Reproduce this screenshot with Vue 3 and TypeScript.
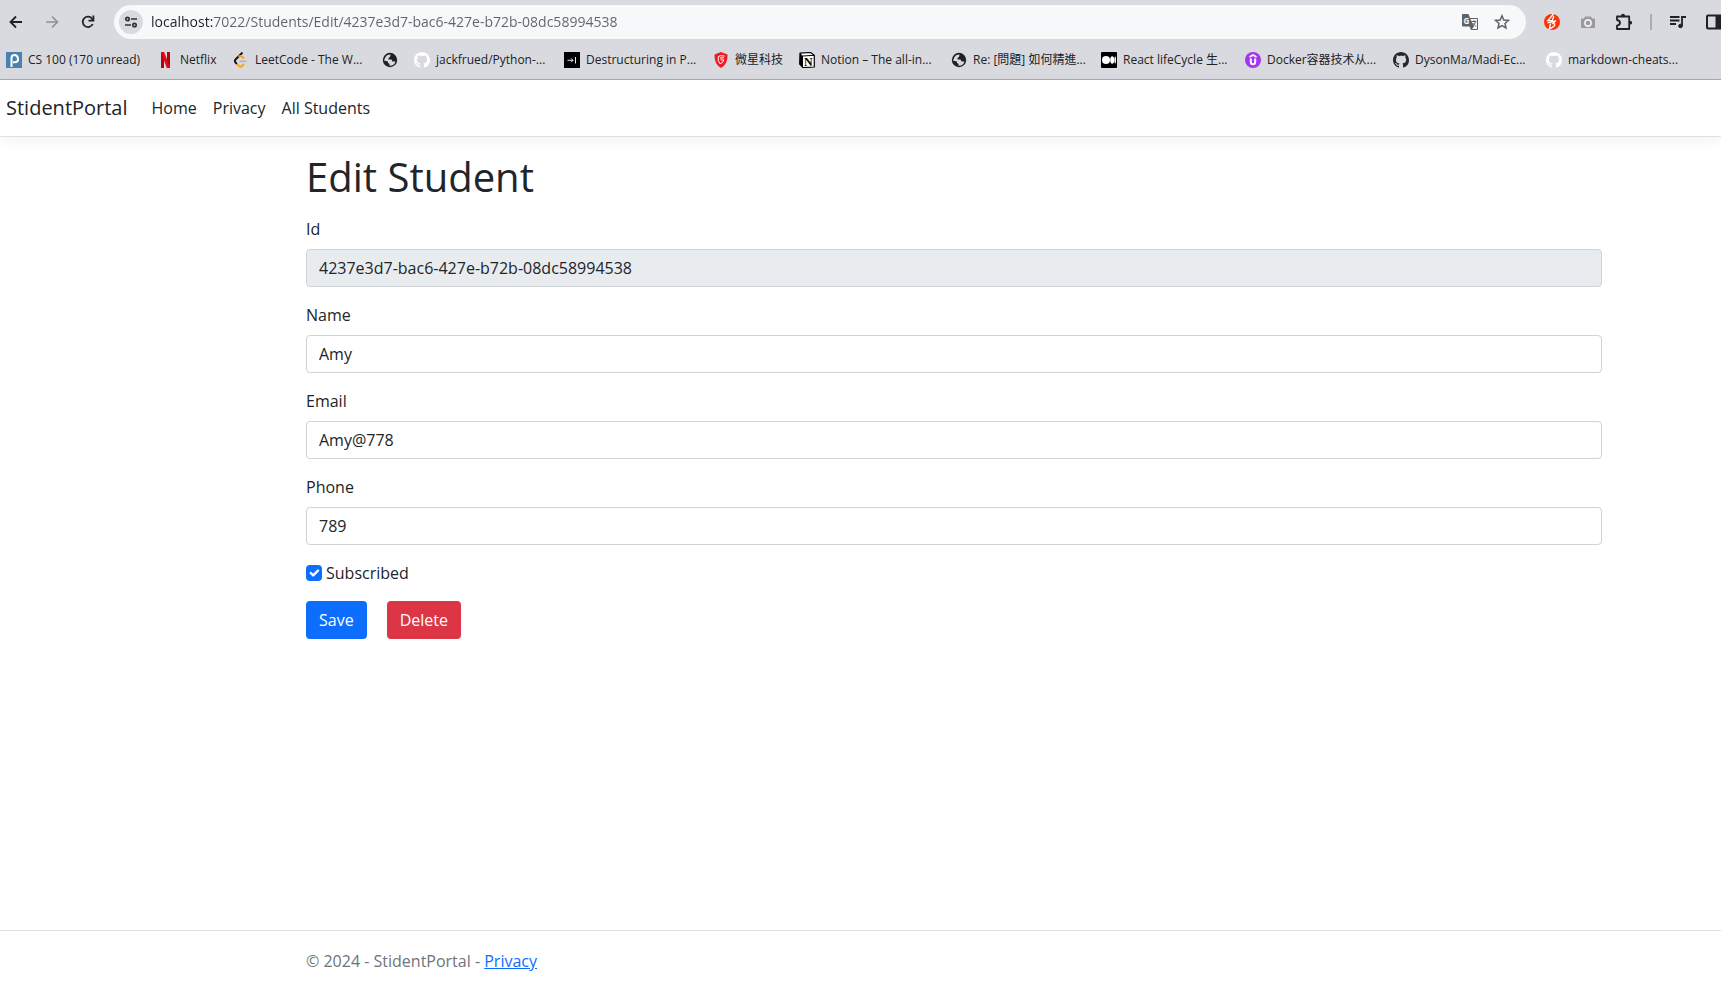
<script setup lang="ts">
import { ref } from 'vue'

interface Bookmark {
  icon: string
  title: string
  width: number
}

const bookmarks: Bookmark[] = [
  { icon: 'pandora', title: 'CS 100 (170 unread)', width: 152 },
  { icon: 'netflix', title: 'Netflix', width: 75 },
  { icon: 'leetcode', title: 'LeetCode - The W...', width: 149 },
  { icon: 'globe', title: '', width: 32 },
  { icon: 'github-light', title: 'jackfrued/Python-...', width: 150 },
  { icon: 'arrow', title: 'Destructuring in P...', width: 149 },
  { icon: 'msi', title: '微星科技', width: 86 },
  { icon: 'notion', title: 'Notion – The all-in...', width: 152 },
  { icon: 'globe', title: 'Re: [問題] 如何精進...', width: 150 },
  { icon: 'medium', title: 'React lifeCycle 生...', width: 144 },
  { icon: 'udemy', title: 'Docker容器技术从...', width: 148 },
  { icon: 'github', title: 'DysonMa/Madi-Ec...', width: 153 },
  { icon: 'github-light', title: 'markdown-cheats...', width: 150 },
]

const url = ref('localhost:7022/Students/Edit/4237e3d7-bac6-427e-b72b-08dc58994538')
const student = ref({
  id: '4237e3d7-bac6-427e-b72b-08dc58994538',
  name: 'Amy',
  email: 'Amy@778',
  phone: '789',
  subscribed: true,
})
</script>

<template>
  <div class="window">
    <div class="browser">
      <div class="toolbar">
        <div class="history">
          <button type="button" class="tool" aria-label="Back">
            <svg width="16" height="16" viewBox="0 0 16 16" fill="none" stroke="#202124" stroke-width="1.8"><path d="M14 8H3M8 2.5L2.5 8L8 13.5" /></svg>
          </button>
          <button type="button" class="tool" aria-label="Forward">
            <svg width="16" height="16" viewBox="0 0 16 16" fill="none" stroke="#8e9096" stroke-width="1.6"><path d="M2 8H13M8 2.5L13.5 8L8 13.5" /></svg>
          </button>
          <button type="button" class="tool" aria-label="Reload">
            <svg width="16" height="16" viewBox="0 0 16 16" fill="none" stroke="#202124" stroke-width="1.8"><path d="M12.7 10A5.2 5.2 0 1 1 12.3 5L13.5 6.5" /><path d="M13.4 1.5V6.6H8.5" /></svg>
          </button>
        </div>
        <div class="omnibox">
          <button type="button" class="site" aria-label="Site information">
            <svg width="14" height="14" viewBox="0 0 14 14" fill="none" stroke="#303236" stroke-width="1.7"><circle cx="3.5" cy="4" r="1.7" /><path d="M7 4H13M1 10H7" /><circle cx="10.5" cy="10" r="1.7" /></svg>
          </button>
          <input v-model="url" class="address" type="text" aria-label="Address" spellcheck="false" />
          <button type="button" class="tool" aria-label="Translate">
            <svg width="18" height="18" viewBox="0 0 18 18"><path d="M2 1H7.5L9 5H16.2Q17 5 17 6V16Q17 17 16 17H10L8.500 13.5H2Q1 13.5 1 12.5V2Q1 1 2 1Z" fill="#5f6368" /><path d="M9.5 6H16V16H11L13 13.5Z" fill="#f6f8fa" /><text x="2.5" y="10.5" font-size="8" font-weight="700" fill="#f6f8fa" font-family="Open Sans, sans-serif">G</text><path d="M10.5 8.5H15.5M13 7V8.5M14.5 8.5Q14 11.5 11.5 13M11.5 10L15 13.5" fill="none" stroke="#5f6368" /></svg>
          </button>
          <button type="button" class="tool star" aria-label="Bookmark this page">
            <svg width="16" height="16" viewBox="0 0 16 16" fill="none" stroke="#5f6368" stroke-width="1.5"><path d="M8 1.8L9.8 6L14.5 6.4L11 9.5L12 14L8 11.6L4 14L5 9.5L1.5 6.4L6.2 6Z" /></svg>
          </button>
        </div>
        <div class="extensions">
          <button type="button" class="tool" aria-label="Extension">
            <svg width="18" height="18" viewBox="0 0 18 18"><circle cx="9" cy="9" r="8" fill="#f9320c" /><path d="M10.5 1L4.8 7.6H9.2M10.8 3L8.600 10M4.5 9.800L13 7.8Q10.500 9.5 9.8 10.5Q13 10.600 11.2 13Q9 15 5.500 16.5M7.5 10.5L6.5 15.500" fill="none" stroke="#fff" stroke-width="1.3" /></svg>
          </button>
          <button type="button" class="tool" aria-label="Screenshot">
            <svg width="16" height="16" viewBox="0 0 16 16"><path d="M5 2.5H11L12 4.5H14Q15 4.5 15 5.5V13Q15 14 14 14H2Q1 14 1 13V5.5Q1 4.5 2 4.5H4Z" fill="#9a9a9a" /><circle cx="8" cy="9" r="3.1" fill="none" stroke="#f2f2f2" stroke-width="1.6" /></svg>
          </button>
          <button type="button" class="tool" aria-label="Extensions">
            <svg width="18" height="18" viewBox="0 0 18 18" fill="none" stroke="#202124" stroke-width="1.8"><path d="M2 3.500H14.2V16H2V12.6Q5 12.2 5 9.8Q5 7.4 2 7Z" stroke-linejoin="round" /><path d="M6 3.2Q6 .8 8 .8T10 3.2ZM14.8 7.8Q17.2 7.8 17.2 9.700T14.8 11.6Z" fill="#202124" stroke="none" /></svg>
          </button>
          <span class="divider"></span>
          <button type="button" class="tool" aria-label="Media controls">
            <svg width="18" height="16" viewBox="0 0 18 16" fill="none" stroke="#202124" stroke-width="1.8"><path d="M1 3H10.5M1 6.5H10.5M1 10H7M13 12V3H17" /><circle cx="11.500" cy="12" r="1.8" fill="#202124" stroke-width="1" /></svg>
          </button>
          <button type="button" class="tool" aria-label="Side panel">
            <svg width="18" height="16" viewBox="0 0 18 16"><rect x="2" y="1.5" width="15" height="13" rx="1" fill="none" stroke="#202124" stroke-width="2" /><path d="M10.5 1H17V15H10.5Z" fill="#202124" /></svg>
          </button>
        </div>
      </div>
      <nav class="bookmarks" aria-label="Bookmarks">
        <a
          v-for="(item, index) in bookmarks"
          :key="index"
          href="#"
          class="bookmark"
          :style="{ width: item.width + 'px' }"
          :aria-label="item.title || 'Bookmark'"
        >
          <svg width="16" height="16" viewBox="0 0 16 16" aria-hidden="true">
            <template v-if="item.icon === 'pandora'">
              <rect width="16" height="16" fill="#4a82ad" />
              <path d="M5.500 15V6Q5.5 3 8.500 3T12 6.600T8.500 10.200H7" fill="none" stroke="#fff" stroke-width="2" />
            </template>
            <template v-else-if="item.icon === 'netflix'">
              <path d="M4.5 0V16M10.5 0V16" stroke="#b1060f" stroke-width="3" />
              <path d="M4.5 0L10.5 16" stroke="#e50914" stroke-width="3.2" />
            </template>
            <template v-else-if="item.icon === 'leetcode'">
              <path d="M9.5 .5L2.5 7.5Q1.2 9 2.5 10.5L4 12" fill="none" stroke="#111" stroke-width="1.9" />
              <path d="M4 12L6 14Q7.5 15.5 9 14L11 12M5.5 4.8Q7.5 3.2 9 4.8L11 6.5" fill="none" stroke="#ffa116" stroke-width="1.9" />
              <path d="M6.5 9.3H13.5" stroke="#b3b3b3" stroke-width="1.6" />
            </template>
            <template v-else-if="item.icon === 'globe'">
              <circle cx="8" cy="8" r="7.2" fill="#202124" />
              <path d="M2 8.5Q2.5 5 5.5 3L8.5 2.5V4.5L6.5 6V7.5H9.5L10.5 9.5H13.5Q13 12.5 10 13.5L7.5 13.8V11.8L6 11V9.5Z" fill="#d9dae0" />
              <path d="M8.5 3.8L10.5 5.5L13.5 6.5" stroke="#202124" stroke-width="1.5" />
            </template>
            <template v-else-if="item.icon === 'github' || item.icon === 'github-light'">
              <path
                :fill="item.icon === 'github' ? '#24292e' : '#ffffff'"
                d="M8 0C3.58 0 0 3.58 0 8c0 3.54 2.29 6.53 5.47 7.59.4.07.55-.17.55-.38 0-.19-.01-.82-.01-1.49-2.01.37-2.53-.49-2.69-.94-.09-.23-.48-.94-.82-1.13-.28-.15-.68-.52-.01-.53.63-.01 1.08.58 1.23.82.72 1.21 1.87.87 2.33.66.07-.52.28-.87.51-1.07-1.78-.2-3.64-.89-3.64-3.95 0-.87.31-1.59.82-2.15-.08-.2-.36-1.02.08-2.12 0 0 .67-.21 2.2.82.64-.18 1.32-.27 2-.27s1.36.09 2 .27c1.53-1.04 2.2-.82 2.2-.82.44 1.1.16 1.92.08 2.12.51.56.82 1.27.82 2.15 0 3.07-1.87 3.75-3.65 3.95.29.25.54.73.54 1.48 0 1.07-.01 1.93-.01 2.2 0 .21.15.46.55.38A8.01 8.01 0 0 0 16 8c0-4.42-3.58-8-8-8Z"
              />
            </template>
            <template v-else-if="item.icon === 'arrow'">
              <rect width="16" height="16" fill="#000" />
              <path d="M3.5 8.3H9M7 6.3L9 8.3L7 10.3M11.5 5V11.5" fill="none" stroke="#e8e8e8" />
            </template>
            <template v-else-if="item.icon === 'msi'">
              <path d="M1.5 2.5L8 0L14.5 2.5Q15 12 8 16Q1 12 1.5 2.5Z" fill="#ed1c24" />
              <path d="M11.500 4Q6.5 3.2 5.300 4.500Q4.500 9 7 11.800Q10 11 10.800 8L7.500 7.800M11 5.800L7 6" fill="none" stroke="#fff" />
            </template>
            <template v-else-if="item.icon === 'notion'">
              <path d="M1 1.2L11.5 .5L15.3 3.2V15L4 15.6L.7 12Z" fill="#fff" stroke="#000" stroke-width="1.2" stroke-linejoin="round" />
              <path d="M1 1.2L4 4V15.6L.7 12Z" fill="#000" />
              <path d="M4 4L15 3.3" stroke="#000" />
              <text x="5" y="13.5" font-size="12" font-weight="700" font-family="Liberation Serif, serif">N</text>
            </template>
            <template v-else-if="item.icon === 'medium'">
              <rect width="16" height="16" rx="1" fill="#000" />
              <circle cx="5" cy="8" r="4" fill="#fff" />
              <ellipse cx="11.2" cy="8" rx="2" ry="3.8" fill="#fff" />
              <ellipse cx="14.2" cy="8" rx=".8" ry="3.5" fill="#fff" />
            </template>
            <template v-else>
              <circle cx="8" cy="8" r="8" fill="#a435f0" />
              <path d="M4.5 5L8 3L11.5 5" fill="none" stroke="#fff" stroke-width="1.6" />
              <path d="M5.8 6.5V10Q5.8 12.2 8 12.2T10.2 10V6.5" fill="none" stroke="#fff" stroke-width="2" />
            </template>
          </svg>
          <span v-if="item.title">{{ item.title }}</span>
        </a>
      </nav>
    </div>

    <header class="navbar">
      <a href="#" class="brand">StidentPortal</a>
      <nav class="links" aria-label="Main">
        <a href="#">Home</a>
        <a href="#">Privacy</a>
        <a href="#">All Students</a>
      </nav>
    </header>

    <main class="row">
      <div class="content">
        <h1>Edit Student</h1>
        <form @submit.prevent>
          <div class="field">
            <label for="id">Id</label>
            <input id="id" type="text" :value="student.id" readonly />
          </div>
          <div class="field">
            <label for="name">Name</label>
            <input id="name" v-model="student.name" type="text" />
          </div>
          <div class="field">
            <label for="email">Email</label>
            <input id="email" v-model="student.email" type="text" />
          </div>
          <div class="field">
            <label for="phone">Phone</label>
            <input id="phone" v-model="student.phone" type="text" />
          </div>
          <div class="check">
            <input id="subscribed" v-model="student.subscribed" type="checkbox" />
            <label for="subscribed">Subscribed</label>
          </div>
          <div class="actions">
            <button type="submit" class="btn save">Save</button>
            <button type="button" class="btn delete">Delete</button>
          </div>
        </form>
      </div>
    </main>

    <footer class="row footer">
      <div class="content">© 2024 - StidentPortal - <a href="#">Privacy</a></div>
    </footer>
  </div>
</template>

<style>
body {
  margin: 0;
  background: #fff;
}
</style>

<style scoped>
* {
  box-sizing: border-box;
}

.window {
  display: flex;
  flex-direction: column;
  height: 100vh;
  overflow: hidden;
  color: #212529;
  font: 400 16px/24px "Open Sans", "Noto Sans CJK TC", sans-serif;
}

button,
input {
  margin: 0;
  font: inherit;
}

.browser {
  flex: none;
  border-bottom: 1px solid #a9abb3;
  background: #d9dae0;
}

.toolbar {
  display: flex;
  align-items: center;
  height: 44px;
}

.history {
  display: flex;
  flex: none;
  gap: 12px;
  padding: 0 14px 0 4px;
}

.tool {
  display: flex;
  flex: none;
  align-items: center;
  justify-content: center;
  width: 24px;
  height: 24px;
  padding: 0;
  border: 0;
  background: none;
}

.omnibox {
  display: flex;
  flex: 1;
  align-items: center;
  min-width: 0;
  height: 34px;
  padding: 0 12px 0 5px;
  border-radius: 17px;
  background: #f6f8fa;
}

.site {
  display: flex;
  flex: none;
  align-items: center;
  justify-content: center;
  width: 24px;
  height: 24px;
  padding: 0;
  border: 0;
  border-radius: 50%;
  background: #d9dae0;
}

.address {
  flex: 1;
  min-width: 0;
  padding: 0 8px;
  border: 0;
  outline: 0;
  background: linear-gradient(90deg, #202124 69px, #5f6368 69px);
  background-clip: text;
  color: transparent;
  font-size: 14px;
  line-height: 24px;
}

.star {
  margin-left: 8px;
}

.extensions {
  display: flex;
  flex: none;
  align-items: center;
  gap: 12px;
  width: 195px;
  padding-left: 14px;
}

.divider {
  flex: none;
  width: 2px;
  height: 16px;
  margin: 0 2px;
  background: #a9adb8;
}

.bookmarks {
  display: flex;
  align-items: center;
  height: 35px;
  padding: 0 0 4px 6px;
  overflow: hidden;
}

.bookmark {
  display: flex;
  flex: none;
  align-items: center;
  gap: 6px;
  color: #202124;
  font-size: 12px;
  line-height: 20px;
  text-decoration: none;
  white-space: nowrap;
}

.bookmark svg {
  flex: none;
}

.navbar {
  display: flex;
  flex: none;
  align-items: center;
  height: 57px;
  padding: 0 6px;
  border-bottom: 1px solid #dee2e6;
  box-shadow: 0 4px 12px rgba(0, 0, 0, 0.05);
}

.navbar a {
  color: #212529;
  text-decoration: none;
}

.navbar .brand {
  margin-right: 24px;
  font-size: 20px;
}

.links {
  display: flex;
  gap: 16px;
}

.row {
  display: grid;
  grid-template-columns: 306fr 1296fr 119fr;
}

.content {
  grid-column: 2;
}

main {
  flex: 1;
  align-content: start;
  padding-top: 16px;
}

h1 {
  margin: 0 0 16px;
  font-size: 40px;
  font-weight: 400;
  line-height: 48px;
}

.field {
  display: flex;
  flex-direction: column;
  gap: 8px;
  margin-bottom: 16px;
}

.field input {
  width: 100%;
  height: 38px;
  padding: 6px 12px;
  border: 1px solid #ced4da;
  border-radius: 4px;
  outline: 0;
  background: #fff;
  color: #212529;
}

.field input:read-only {
  background: #e9ecef;
}

.check {
  display: flex;
  align-items: center;
  gap: 4px;
  margin-bottom: 16px;
}

.check input {
  width: 16px;
  height: 16px;
  border-radius: 4px;
  appearance: none;
  background: #0d6efd;
}

.check input:checked {
  background-image: url("data:image/svg+xml,%3Csvg xmlns='http://www.w3.org/2000/svg' viewBox='0 0 20 20'%3E%3Cpath fill='none' stroke='%23fff' stroke-linecap='round' stroke-linejoin='round' stroke-width='3' d='m6 10 3 3 6-6'/%3E%3C/svg%3E");
}

.actions {
  display: flex;
  gap: 20px;
}

.btn {
  height: 38px;
  padding: 0 13px;
  border: 0;
  border-radius: 4px;
  color: #fff;
}

.save {
  background: #0d6efd;
}

.delete {
  background: #dc3545;
}

.footer {
  flex: none;
  height: 53px;
  border-top: 1px solid #dee2e6;
  color: #6c757d;
  line-height: 60px;
}

.footer a {
  color: #0d6efd;
}
</style>
